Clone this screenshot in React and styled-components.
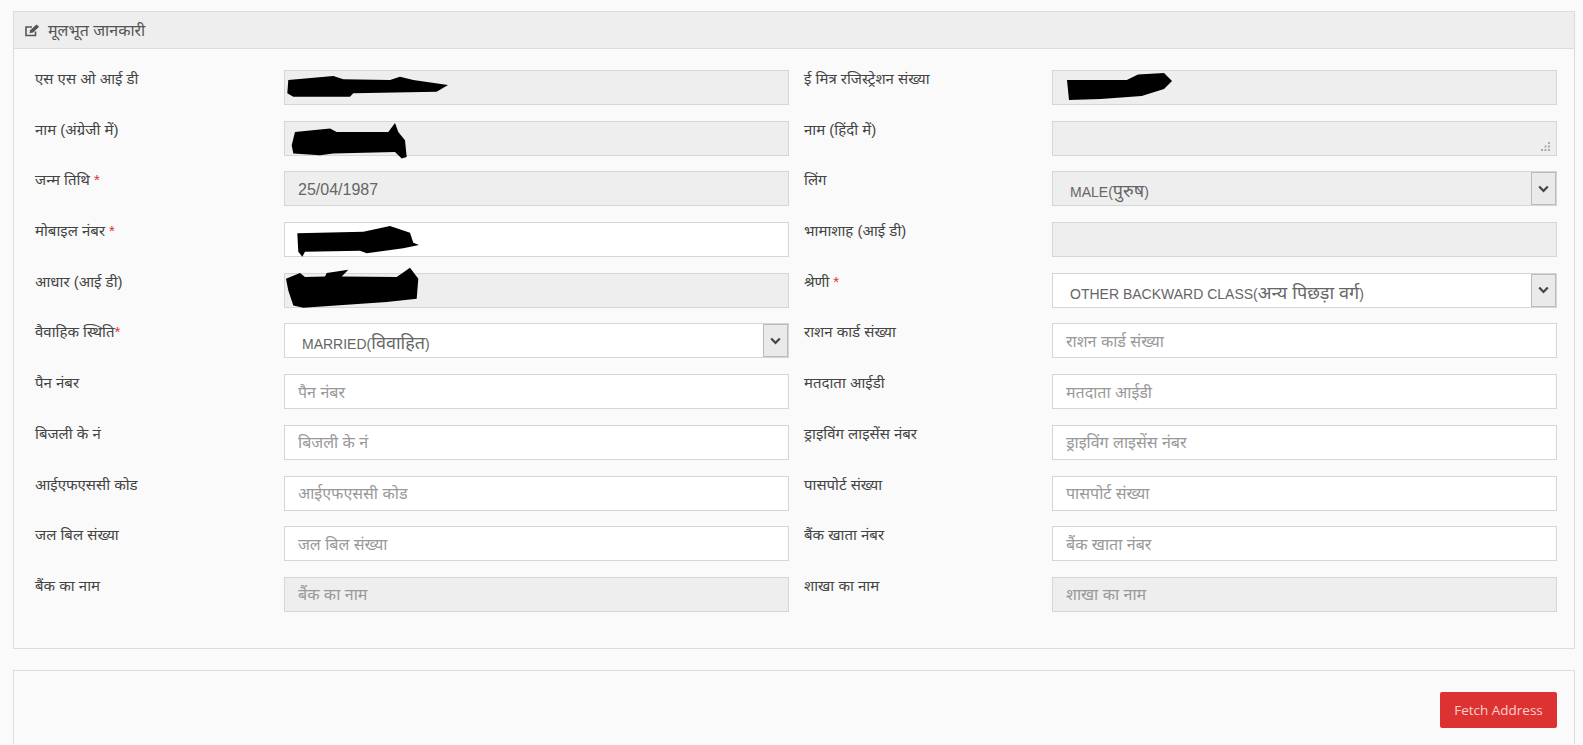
import React from 'react'
import styled, { createGlobalStyle } from 'styled-components'

const fontStack = `"Liberation Sans", "Noto Sans", "Noto Sans Devanagari", "Lohit Devanagari", "Mangal", sans-serif`

const GlobalStyle = createGlobalStyle`
  html, body {
    margin: 0;
    padding: 0;
    background: #fafafa;
    height: 745px;
    overflow: hidden;
    font-family: ${fontStack};
  }
  * { box-sizing: border-box; }
`

const Page = styled.div`
  height: 745px;
  overflow: hidden;
  padding: 11px 8px 0 13px;
`

const Panel = styled.section`
  background: #fafafa;
  border: 1px solid #dcdcdc;
  margin-bottom: 21px;
`

const BottomPanel = styled(Panel)`
  height: 74px;
  margin-bottom: 0;
  border-bottom: none;
`

const PanelHeading = styled.div`
  height: 37px;
  background: #eeeeee;
  border-bottom: 1px solid #dcdcdc;
  display: flex;
  align-items: center;
  gap: 8px;
  padding-left: 11px;
  font-size: 16px;
  color: #555;
`

const FormGrid = styled.div`
  display: grid;
  grid-template-columns: 234px 505px 233px 505px;
  grid-auto-rows: 35px;
  column-gap: 15px;
  row-gap: 15.7px;
  padding: 21px 17px 36px 21px;
`

const Label = styled.label`
  font-size: 15px;
  line-height: 18px;
  color: #444;
`

const Star = styled.span`
  color: #e03030;
  margin-left: ${props => (props.$tight ? '0' : '4px')};
`

const FieldBox = styled.div`
  position: relative;
  height: 35px;
`

const TextField = styled.input`
  width: 100%;
  height: 35px;
  padding: 2px 13px 0;
  font-family: ${fontStack};
  font-size: 16px;
  color: #666;
  background: ${props => (props.disabled ? '#eeeeee' : '#fff')};
  border: 1px solid #d6d6d6;
  outline: none;
  opacity: 1;
  &::placeholder { color: #999; opacity: 1; }
`

const AreaField = styled.textarea`
  display: block;
  width: 100%;
  height: 35px;
  background: #eeeeee;
  border: 1px solid #d6d6d6;
  outline: none;
  resize: none;
`

const Grip = styled.svg`
  position: absolute;
  right: 6px;
  bottom: 4px;
`

const SelectBox = styled.div`
  height: 35px;
  display: flex;
  align-items: center;
  justify-content: space-between;
  padding-left: 17px;
  font-size: 14px;
  color: #666;
  background: ${props => (props.$locked ? '#eeeeee' : '#fff')};
  border: 1px solid #d6d6d6;
`

const SelectText = styled.span`
  padding-top: 3px;
`

const HindiPart = styled.span`
  font-size: 18px;
`

const SelectArrow = styled.span`
  width: 25px;
  height: 33px;
  display: flex;
  align-items: center;
  justify-content: center;
  background: #eaeaea;
  border: 1px solid #bbb;
`

const Scribble = styled.svg`
  position: absolute;
  left: 0;
  top: 0;
  pointer-events: none;
  overflow: visible;
`

const ButtonRow = styled.div`
  display: flex;
  justify-content: flex-end;
  padding: 21px 17px 0 0;
`

const RedButton = styled.button`
  width: 117px;
  height: 36px;
  border: none;
  border-radius: 2px;
  background: #dd3232;
  color: #fbd0d0;
  font-family: "Open Sans", ${fontStack};
  font-size: 13.5px;
`

const EditIcon = () => (
  <svg width="15" height="13" viewBox="0 0 15 13" fill="none">
    <path d="M10.5 7.5V11.5H1V3H7" stroke="#555" strokeWidth="1.6" />
    <path d="M4.5 9.3l.7-3L11.5.6l2.6 2.2-6 5.7z" fill="#555" />
  </svg>
)

const Arrow = () => (
  <svg width="11" height="8" viewBox="0 0 11 8" fill="none">
    <path d="M1.2 1.5L5.5 6l4.3-4.5" stroke="#444" strokeWidth="2.2" />
  </svg>
)

// black marker strokes that hide personal data in the source picture
const scribbles = {
  ssoId: 'M4.3 10L49.3 6L59.3 9.3L106 10L116 6.7L129.3 10L164 15L152.7 21.7L69.3 23.3L66 26.7L9.3 26.7L3.3 23.3Z',
  nameEn: 'M11 11L46 7.6L52.7 11L104.3 11L111 2L114.3 11L121 19.3L122.7 36L117.7 37.6L111 31L49.3 32.6L36 34.3L9.3 32.6L7.7 24.3Z',
  emitra: 'M15 10L74.8 10L86 4.5L112 3L120 11L112 19L89.7 26L48.6 29L17 30Z',
  mobile: 'M13.3 11.3L79.3 9.7L106 4L126 10.7L129.3 20.7L135 23L119.3 26.3L82.7 31.3L76 28.7L21 29.7L18.3 34.7L14.3 29.7Z',
  aadhaar: 'M2 5.7L16 0L21 4L41 3.4L42.7 0L64.3 -3.3L57.7 3.4L112.7 4L126 -5.3L134.3 5.7L132.7 25.7L102.7 29L19.3 34.7L9.3 32.4L4.3 17.4Z',
}

const Field = ({ value, placeholder, disabled, scribble }) => (
  <FieldBox>
    <TextField value={value || ''} placeholder={placeholder} disabled={disabled} readOnly />
    {scribble && (
      <Scribble width="170" height="35" viewBox="0 0 170 35">
        <path d={scribbles[scribble]} fill="#000" />
      </Scribble>
    )}
  </FieldBox>
)

const ResizableField = () => (
  <FieldBox>
    <AreaField disabled />
    <Grip width="11" height="11" viewBox="0 0 11 11" fill="#aaa">
      <rect x="8" y="1" width="2" height="2" />
      <rect x="8" y="4.5" width="2" height="2" />
      <rect x="8" y="8" width="2" height="2" />
      <rect x="4.5" y="4.5" width="2" height="2" />
      <rect x="4.5" y="8" width="2" height="2" />
      <rect x="1" y="8" width="2" height="2" />
    </Grip>
  </FieldBox>
)

const Select = ({ text, hindi, locked }) => (
  <SelectBox $locked={locked}>
    <SelectText>{text}(<HindiPart>{hindi}</HindiPart>)</SelectText>
    <SelectArrow><Arrow /></SelectArrow>
  </SelectBox>
)

const App = () => (
  <Page>
    <GlobalStyle />
    <Panel>
      <PanelHeading><EditIcon />मूलभूत जानकारी</PanelHeading>
      <FormGrid>
        <Label>एस एस ओ आई डी</Label>
        <Field disabled scribble="ssoId" />
        <Label>ई मित्र रजिस्ट्रेशन संख्या</Label>
        <Field disabled scribble="emitra" />

        <Label>नाम (अंग्रेजी में)</Label>
        <Field disabled scribble="nameEn" />
        <Label>नाम (हिंदी में)</Label>
        <ResizableField />

        <Label>जन्म तिथि<Star>*</Star></Label>
        <Field disabled value="25/04/1987" />
        <Label>लिंग</Label>
        <Select text="MALE" hindi="पुरुष" locked />

        <Label>मोबाइल नंबर<Star>*</Star></Label>
        <Field scribble="mobile" />
        <Label>भामाशाह (आई डी)</Label>
        <Field disabled />

        <Label>आधार (आई डी)</Label>
        <Field disabled scribble="aadhaar" />
        <Label>श्रेणी<Star>*</Star></Label>
        <Select text="OTHER BACKWARD CLASS" hindi="अन्य पिछड़ा वर्ग" />

        <Label>वैवाहिक स्थिति<Star $tight>*</Star></Label>
        <Select text="MARRIED" hindi="विवाहित" />
        <Label>राशन कार्ड संख्या</Label>
        <Field placeholder="राशन कार्ड संख्या" />

        <Label>पैन नंबर</Label>
        <Field placeholder="पैन नंबर" />
        <Label>मतदाता आईडी</Label>
        <Field placeholder="मतदाता आईडी" />

        <Label>बिजली के नं</Label>
        <Field placeholder="बिजली के नं" />
        <Label>ड्राइविंग लाइसेंस नंबर</Label>
        <Field placeholder="ड्राइविंग लाइसेंस नंबर" />

        <Label>आईएफएससी कोड</Label>
        <Field placeholder="आईएफएससी कोड" />
        <Label>पासपोर्ट संख्या</Label>
        <Field placeholder="पासपोर्ट संख्या" />

        <Label>जल बिल संख्या</Label>
        <Field placeholder="जल बिल संख्या" />
        <Label>बैंक खाता नंबर</Label>
        <Field placeholder="बैंक खाता नंबर" />

        <Label>बैंक का नाम</Label>
        <Field disabled placeholder="बैंक का नाम" />
        <Label>शाखा का नाम</Label>
        <Field disabled placeholder="शाखा का नाम" />
      </FormGrid>
    </Panel>
    <BottomPanel>
      <ButtonRow>
        <RedButton>Fetch Address</RedButton>
      </ButtonRow>
    </BottomPanel>
  </Page>
)

export default App
